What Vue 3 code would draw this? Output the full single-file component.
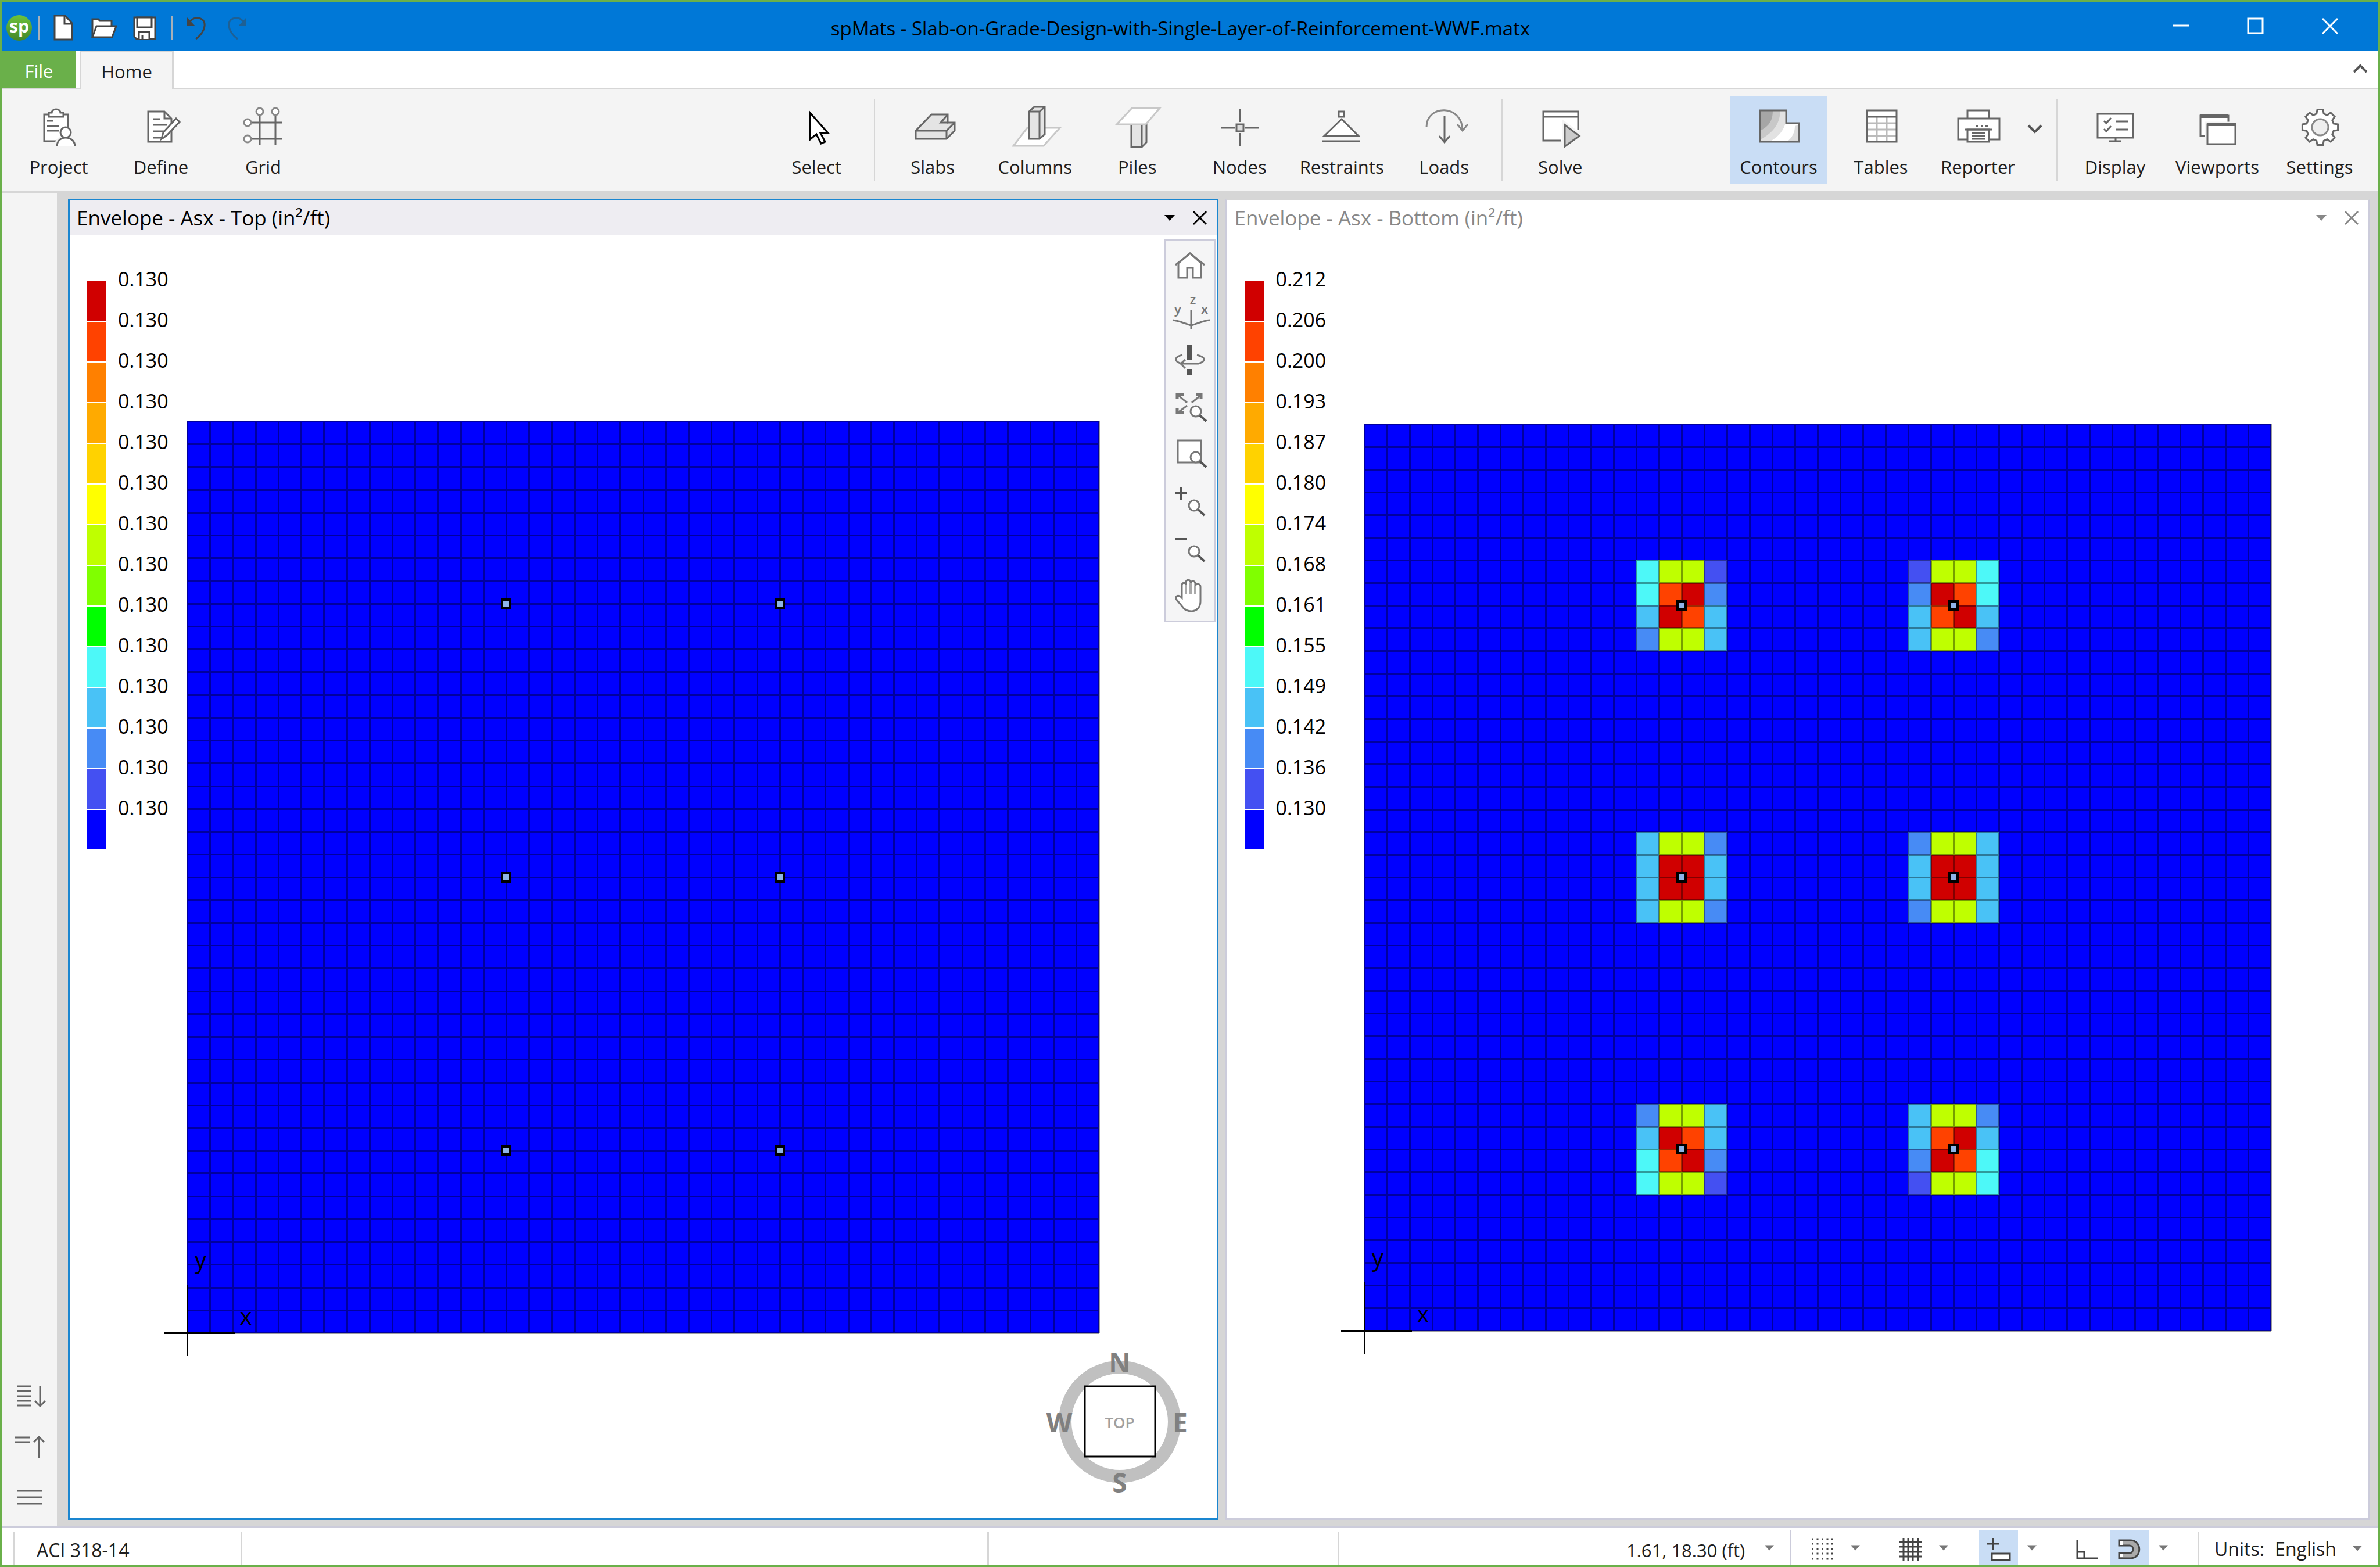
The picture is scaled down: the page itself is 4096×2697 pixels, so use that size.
<script setup>
const gear = (() => {
  const pts = []
  for (let i = 0; i < 8; i++) {
    const a = (i * Math.PI) / 4 - Math.PI / 2
    for (const [d, r] of [[-0.26, 24], [-0.16, 31], [0.16, 31], [0.26, 24]]) {
      pts.push(`${(43 + r * Math.cos(a + d)).toFixed(1)},${(42 + r * Math.sin(a + d)).toFixed(1)}`)
    }
  }
  return pts.join(' ')
})()

// Ribbon glyphs, drawn on an 84 x 84 board
const icons = {
  project: '<path fill="#fff" d="M17 20H58V66H17z"/><path fill="#fff" d="M25 24V17H30C31 9 44 9 45 17H50V24z"/><path d="M22 31H33M22 40H42M22 48H42"/><path stroke="#f4f4f4" stroke-width="8" d="M39 74C39 64 46 60 54 60S69 64 69 74"/><circle cx="54" cy="51" r="9" fill="#fff"/><path fill="#fff" d="M39 75C39 65 46 60 54 60S70 65 70 75"/>',
  define: '<path fill="#fff" d="M20 15H48L60 27V67H20z"/><path d="M48 15V27H60M28 28H41M28 38H52M28 49H50M28 60H48"/><path fill="#fff" d="M43 62L46 51L68 27L74 33L52 56z"/>',
  grid: '<path d="M36 22V72M63 22V72M22 34H74M22 62H74"/><g fill="#fff" stroke="#888"><circle cx="36" cy="15" r="6"/><circle cx="63" cy="15" r="6"/><circle cx="15" cy="34" r="6"/><circle cx="15" cy="62" r="6"/></g>',
  select: '<path fill="#fff" stroke="#000" d="M31 17V63L42 54L50 70L57 67L49 52H62z"/>',
  slabs: '<path fill="#e4e4e4" d="M13 48L40 20H68V34H80V48L66 62H13z"/><path d="M13 48H66V62M66 48L80 34M68 20L56 34H68"/>',
  columns: '<path fill="#fff" stroke="#c8c8c8" d="M29 43H85L57 74H5z"/><path fill="#e4e4e4" d="M32 15L41 7H59V54L50 62H32z"/><path d="M32 15H50V62M50 15L59 7"/>',
  piles: '<path fill="#e4e4e4" d="M32 34V76H50L58 68V34z"/><path d="M50 34V76"/><path fill="#fff" stroke="#c8c8c8" d="M33 9H81L57 37H7z"/>',
  nodes: '<path d="M43 10V33M43 52V75M11 43H34M52 43H75"/><path fill="#ddd" d="M37 37H49V49H37z"/>',
  restraints: '<path fill="#fff" d="M37 15H46V24H37zM42 28L71 57H12z"/><path d="M8 66H74"/>',
  loads: '<path stroke="#888" d="M12 42C12 2 74 2 74 48M65 37L74 48L83 37"/><path d="M43 22V68M34 57L43 68L52 57"/>',
  solve: '<path fill="#fff" stroke="none" d="M13 15H73V65H13z"/><path d="M43 65H13V15H73V47M13 24H73"/><path fill="#ccc" stroke="#f4f4f4" stroke-width="10" d="M50 38L75 57L50 75z"/><path fill="#ccc" d="M50 38L75 57L50 75z"/>',
  contours: '<path fill="#fff" stroke="none" d="M10 13H55V35H77V67H10z"/><path fill="#e2e2e2" stroke="none" d="M10 13H55V30C52 48 40 60 26 67H10z"/><path fill="#c8c8c8" stroke="none" d="M10 13H45C44 40 30 52 10 64z"/><path fill="#a6a6a6" stroke="none" d="M10 13H32C32 30 26 40 10 48z"/><path fill="#ddd" stroke="none" d="M77 38V67H56C66 60 70 50 70 40z"/><path d="M10 13H55V35H77V67H10z"/>',
  tables: '<path fill="#fff" stroke="none" d="M18 13H69V67H18z"/><path stroke="#bbb" d="M35 23V67M52 23V67M18 35H69M18 46H69M18 57H69"/><path d="M18 13H69V67H18zM18 24H69"/>',
  reporter: '<path fill="#fff" d="M24 27V13H61V27M8 27H79V63H8z"/><path fill="#fff" d="M24 46H61V67H24z"/><path d="M20 46H66M32 52H54M32 57H54M32 62H54"/><path stroke-dasharray="4 4" d="M39 40H60"/>',
  display: '<path fill="#fff" d="M12 19H73V60H12z"/><path d="M43 60V65M32 66H53M43 32H65M43 46H65M23 31L27 35L35 26M23 45L27 49L35 40"/>',
  viewports: '<path fill="#fff" d="M13 22H61V57H13z"/><path d="M13 23H61" stroke-width="6"/><path stroke="#f4f4f4" stroke-width="9" fill="#fff" d="M25 37H73V70H25z"/><path fill="#fff" d="M25 37H73V71H25z"/><path d="M24 37H74" stroke-width="6"/>',
  settings: `<polygon fill="#fff" points="${gear}"/><circle cx="43" cy="42" r="14" fill="#eee" stroke="#888"/>`
}
const leftTools = [['project', 'Project'], ['define', 'Define'], ['grid', 'Grid']]
const middleTools = [
  ['select', 'Select'], null, ['slabs', 'Slabs'], ['columns', 'Columns'], ['piles', 'Piles'],
  ['nodes', 'Nodes'], ['restraints', 'Restraints'], ['loads', 'Loads'], null, ['solve', 'Solve']
]
const outputTools = [['contours', 'Contours'], ['tables', 'Tables']]
const viewTools = [['display', 'Display'], ['viewports', 'Viewports'], ['settings', 'Settings']]

const lens = (x, y) => `<circle cx="${x}" cy="${y}" r="9" fill="#fff"/><path stroke="#555" stroke-width="4" d="M${x + 7} ${y + 7}L${x + 18} ${y + 17}"/>`
const palette = [
  ['Home view', '<path fill="#fff" d="M10 25V50H25V33H35V50H49V25L30 8z"/><path d="M5 28L30 8L55 28"/>'],
  ['Isometric view', '<path d="M32 24V57M0 42C12 43 20 48 32 51C44 48 52 43 64 42"/><g fill="#777" stroke="none" font-size="22" font-weight="600" text-anchor="middle"><text x="35" y="14">z</text><text x="9" y="31">y</text><text x="55" y="31">x</text></g>'],
  ['Rotate', '<path d="M17 21C2 24 2 33 17 36H44C58 32 58 25 42 21M22 29L14 36L22 44"/><path stroke="#555" stroke-width="9" d="M29 3V29M29 45V55"/>'],
  ['Zoom extents', '<path d="M9 9L25 22M49 9L33 22M9 39L25 27"/><path stroke-width="5" d="M8 16V8H19M40 8H49V16M8 32V39H19"/>' + lens(40, 37)],
  ['Zoom window', '<path fill="#fff" d="M9 6H49V44H9z"/>' + lens(40, 35)],
  ['Zoom in', '<path stroke="#555" stroke-width="4" d="M5 16H24M15 5V27"/>' + lens(37, 37)],
  ['Zoom out', '<path stroke="#555" stroke-width="4" d="M5 14H24"/>' + lens(37, 35)],
  ['Pan', '<path fill="#fff" d="M16 34V12C16 7 23 7 23 12V7C23 2 31 2 31 7V9C31 4 39 4 39 9V13C40 9 48 9 48 15V40C48 60 24 62 16 48L6 36C4 30 11 28 16 34z"/><path stroke="#aaa" stroke-width="4" d="M23 12V28M31 9V28M39 13V28"/>']
]

const bandColors = ['#d00000', '#ff4200', '#ff8000', '#ffaa00', '#ffd200', '#ffff00', '#bfff00', '#80ff00', '#00ff00', '#4df8f8', '#49c2f6', '#478bf5', '#4450f2', '#0000ff']
const bottomValues = ['0.212', '0.206', '0.200', '0.193', '0.187', '0.180', '0.174', '0.168', '0.161', '0.155', '0.149', '0.142', '0.136', '0.130']

// Contour patches around the loaded nodes; letters are keys of fills
const fills = { R: '#d00000', O: '#ff4200', L: '#bfff00', C: '#4df8f8', S: '#49c2f6', B: '#478bf5', I: '#4450f2' }
const corner = ['CLLI', 'CORB', 'SROS', 'BLLS']
const centre = ['SLLB', 'SRRS', 'SRRS', 'SLLB']
const flipX = rows => rows.map(r => [...r].reverse().join(''))
const flipY = rows => [...rows].reverse()
const patches = [
  [12, 6, corner], [24, 6, flipX(corner)],
  [12, 18, centre], [24, 18, flipX(centre)],
  [12, 30, flipY(corner)], [24, 30, flipX(flipY(corner))]
]
const cells = patches.flatMap(([c, r, rows]) =>
  rows.flatMap((row, j) => [...row].map((k, i) => ({ col: c + i, row: r + j, fill: fills[k] }))))
const nodes = [8, 20, 32].flatMap(row => [14, 26].map(col => ({ col, row })))

const viewports = [
  { title: 'Envelope - Asx - Top (in²/ft)', active: true, w: 1974, x: 202, y: 320, size: 1569, values: Array(14).fill('0.130'), cells: [] },
  { title: 'Envelope - Asx - Bottom (in²/ft)', active: false, w: 1963, x: 236, y: 325, size: 1560, values: bottomValues, cells }
]
const gridPath = v => {
  let d = ''
  for (let i = 0; i <= 40; i++) {
    const p = Math.round((i * v.size) / 40)
    d += `M${p} 0V${v.size}M0 ${p}H${v.size}`
  }
  return d
}
const at = (v, n) => Math.round((n * v.size) / 40)

const snaps = [
  { name: 'Dot grid', on: false, menu: true, art: '<path stroke-dasharray="3 5.5" d="M16 16H53M16 24H53M16 33H53M16 41H53M16 50H53"/>' },
  { name: 'Grid lines', on: false, menu: true, art: '<path d="M14 21H54M14 29H54M14 38H54M14 46H54M22 14V53M30 14V53M38 14V53M47 14V53"/>' },
  { name: 'Object snap', on: true, menu: true, art: '<path d="M14 24H34M24 14V34"/><path fill="#fff" d="M22 41H53V52H22z"/>' },
  { name: 'Ortho', on: false, menu: false, art: '<path d="M17 17V49H52M17 38H29V49"/>' },
  { name: 'Magnet', on: true, menu: true, art: '<path fill="#aaa" d="M15 18H34C55 18 55 49 34 49H15V40H33C41 40 41 27 33 27H15z"/><path fill="#fff" stroke="none" d="M17 20H22V26H17zM17 41H22V47H17z"/>' }
]
</script>

<template>
  <div class="app">
    <header class="titlebar">
      <div class="quick">
        <svg class="logo" viewBox="0 0 44 44">
          <defs><linearGradient id="lg" x1="0" y1="0" x2="0" y2="1"><stop offset="0" stop-color="#6cc33c" /><stop offset="1" stop-color="#44862a" /></linearGradient></defs>
          <circle cx="22" cy="22" r="22" fill="url(#lg)" />
          <text x="22" y="30" text-anchor="middle" class="logo-text">sp</text>
        </svg>
        <i class="qsep"></i>
        <button class="qbtn" aria-label="New"><svg viewBox="0 0 44 44"><path d="M7 1H25L37 14V42H7z" /><path d="M24 1V15H37" fill="none" /></svg></button>
        <button class="qbtn" aria-label="Open"><svg viewBox="0 0 44 44"><path d="M2 38V7H12L15 10H35V19" /><path d="M9 19H43L36 38H2z" /></svg></button>
        <button class="qbtn" aria-label="Save"><svg viewBox="0 0 44 44"><path d="M4 4H40V41H8L4 37z" /><path d="M9 4H34V21H9zM12 41V29H30V41M18 41V34" /></svg></button>
        <i class="qsep"></i>
        <button class="qbtn" aria-label="Undo"><svg viewBox="0 0 44 44"><path fill="none" d="M21 41C40 28 42 4 22 5C16 5 12 9 9 15" /><path d="M6 4V19H20z" fill="#444" stroke="none" /></svg></button>
        <button class="qbtn" aria-label="Redo" disabled><svg viewBox="0 0 44 44"><path fill="none" d="M23 41C4 28 2 4 22 5C28 5 32 9 35 15" /><path d="M38 4V19H24z" fill="#444" stroke="none" /></svg></button>
      </div>
      <h1>spMats - Slab-on-Grade-Design-with-Single-Layer-of-Reinforcement-WWF.matx</h1>
      <div class="winbtns">
        <button aria-label="Minimize"><svg viewBox="0 0 28 28"><path d="M0 13H28" /></svg></button>
        <button aria-label="Maximize"><svg viewBox="0 0 28 28"><path d="M1 1H26V26H1z" /></svg></button>
        <button aria-label="Close"><svg viewBox="0 0 28 28"><path d="M1 1L27 27M27 1L1 27" /></svg></button>
      </div>
    </header>

    <nav class="tabs">
      <button class="file">File</button>
      <button class="home">Home</button>
      <button class="collapse" aria-label="Collapse ribbon"><svg viewBox="0 0 26 18"><path d="M2 15L13 4L24 15" /></svg></button>
    </nav>

    <section class="ribbon">
      <button v-for="t in leftTools" :key="t[0]" class="tool"><svg viewBox="0 0 84 84" v-html="icons[t[0]]"></svg><span>{{ t[1] }}</span></button>
      <div class="wide"></div>
      <template v-for="(t, i) in middleTools" :key="i">
        <button v-if="t" class="tool"><svg viewBox="0 0 84 84" v-html="icons[t[0]]"></svg><span>{{ t[1] }}</span></button>
        <i v-else class="rsep"></i>
      </template>
      <div class="narrow"></div>
      <button v-for="t in outputTools" :key="t[0]" class="tool" :class="{ on: t[0] === 'contours' }"><svg viewBox="0 0 84 84" v-html="icons[t[0]]"></svg><span>{{ t[1] }}</span></button>
      <div class="split">
        <button class="tool reporter"><svg viewBox="0 0 84 84" v-html="icons.reporter"></svg><span>Reporter</span></button>
        <button class="more" aria-label="Reporter options"><svg viewBox="0 0 26 18"><path d="M2 3L13 14L24 3" /></svg></button>
      </div>
      <i class="rsep"></i>
      <button v-for="t in viewTools" :key="t[0]" class="tool"><svg viewBox="0 0 84 84" v-html="icons[t[0]]"></svg><span>{{ t[1] }}</span></button>
    </section>

    <main class="work">
      <aside class="side">
        <button aria-label="Expand list"><svg viewBox="0 0 48 48"><path d="M2 7H27M2 15H27M2 24H27M2 32H27M2 40H27M42 6V41M33 32L42 41L51 32" /></svg></button>
        <button aria-label="Collapse list"><svg viewBox="0 0 48 48"><path d="M-1 8H25M-1 16H25M40 7V43M31 16L40 7L49 16" /></svg></button>
        <button aria-label="Menu"><svg viewBox="0 0 48 48"><path d="M2 13H46M2 24H46M2 35H46" /></svg></button>
      </aside>

      <section v-for="v in viewports" :key="v.title" class="viewport" :class="{ active: v.active }">
        <header class="vhead">
          <h2>{{ v.title }}</h2>
          <button class="vmenu" aria-label="Viewport menu"><svg viewBox="0 0 18 10"><path d="M0 0H18L9 10z" /></svg></button>
          <button class="vclose" aria-label="Close viewport"><svg viewBox="0 0 26 26"><path d="M1 1L25 25M25 1L1 25" /></svg></button>
        </header>
        <div class="canvas">
          <svg class="model" :viewBox="`0 0 ${v.w} 2208`" preserveAspectRatio="xMinYMin meet">
            <g :transform="`translate(${v.x} ${v.y})`">
              <rect :width="v.size" :height="v.size" fill="#0000ff" />
              <rect v-for="(c, i) in v.cells" :key="i" :x="at(v, c.col)" :y="at(v, c.row)" :width="at(v, c.col + 1) - at(v, c.col)" :height="at(v, c.row + 1) - at(v, c.row)" :fill="c.fill" />
              <path :d="gridPath(v)" class="gridlines" />
              <rect v-for="(n, i) in nodes" :key="'n' + i" :x="at(v, n.col) - 7" :y="at(v, n.row) - 7" width="14" height="14" class="node" />
              <g :transform="`translate(0 ${v.size})`">
                <path d="M-40 0H82M0 -83V40" class="axis" />
                <text x="23" y="-111" class="axis-name">y</text>
                <text x="101" y="-14" class="axis-name">x</text>
              </g>
            </g>
          </svg>
          <ul class="legend">
            <li v-for="(val, i) in v.values" :key="i"><i :style="{ background: bandColors[i] }"></i><span>{{ val }}</span></li>
          </ul>
          <div v-if="v.active" class="palette">
            <button v-for="p in palette" :key="p[0]" :aria-label="p[0]"><svg viewBox="0 0 60 60" v-html="p[1]"></svg></button>
          </div>
          <svg v-if="v.active" class="compass" viewBox="0 0 250 250">
            <circle cx="125" cy="125" r="94" fill="none" stroke="#c0c0c0" stroke-width="22" />
            <rect x="65" y="64" width="121" height="121" fill="#fff" stroke="#000" stroke-width="3" />
            <g class="dir">
              <text x="125" y="40">N</text><text x="21" y="143">W</text><text x="229" y="143">E</text><text x="125" y="247">S</text>
            </g>
            <text x="125" y="136" class="face">TOP</text>
          </svg>
        </div>
      </section>
    </main>

    <footer class="status">
      <div class="cell stub"></div>
      <div class="cell code">ACI 318-14</div>
      <div class="cell long"></div>
      <div class="cell mid"></div>
      <div class="rest"></div>
      <div class="coords"><span>1.61, 18.30 (ft)</span><button class="drop" aria-label="Coordinate options"><svg viewBox="0 0 18 10"><path d="M0 0H18L9 10z" /></svg></button></div>
      <div class="snaps">
        <div v-for="s in snaps" :key="s.name" class="snap" :class="{ single: !s.menu }">
          <button class="toggle" :class="{ on: s.on }" :aria-label="s.name"><svg viewBox="0 0 67 61" v-html="s.art"></svg></button>
          <button v-if="s.menu" class="drop" :aria-label="s.name + ' options'"><svg viewBox="0 0 18 10"><path d="M0 0H18L9 10z" /></svg></button>
        </div>
      </div>
      <div class="units">
        <label for="units">Units:</label>
        <select id="units"><option>English</option></select>
        <svg class="caret" viewBox="0 0 18 10"><path d="M0 0H18L9 10z" /></svg>
      </div>
    </footer>
  </div>
</template>

<style>
html, body { margin: 0; background: #fff; }
</style>

<style scoped>
.app {
  box-sizing: border-box;
  height: 100vh;
  display: flex;
  flex-direction: column;
  border: 3px solid #6ab04a;
  background: #fff;
  color: #1e1e1e;
  font-family: "Open Sans", "Noto Sans", sans-serif;
  font-size: 31px;
  overflow: hidden;
}
button, select { font: inherit; color: inherit; border: 0; padding: 0; margin: 0; background: none; }
svg { display: block; overflow: visible; }
h1, h2, ul { margin: 0; padding: 0; font-weight: 400; }

.titlebar { flex: none; display: flex; align-items: center; height: 84px; background: #0078d7; }
.quick { display: flex; align-items: center; padding: 5px 0 0 8px; }
.logo { width: 44px; height: 44px; }
.logo-text { fill: #fff; font-size: 30px; font-weight: 700; }
.qsep { width: 3px; height: 40px; margin: 0 5px 0 11px; background: #a8b0b8; }
.qbtn { width: 70px; height: 44px; display: flex; justify-content: center; }
.qbtn svg { width: 44px; height: 44px; fill: #fff; stroke: #444; stroke-width: 3; }
.qbtn:disabled { opacity: 0.45; }
.titlebar h1 { flex: 1; padding: 7px 70px 0 0; text-align: center; font-size: 33px; color: #000; white-space: nowrap; }
.winbtns { display: flex; padding-right: 19px; }
.winbtns button { width: 128px; height: 84px; display: flex; align-items: center; justify-content: center; }
.winbtns svg { width: 28px; height: 28px; fill: none; stroke: #fff; stroke-width: 3; }

.tabs { flex: none; display: flex; height: 67px; box-sizing: border-box; box-shadow: inset 0 -3px #d6d6d6; }
.file { width: 128px; height: 64px; padding-top: 5px; background: #6ab04a; color: #fff; }
.home { box-sizing: border-box; width: 162px; height: 67px; margin-left: 6px; padding-top: 2px; border: 3px solid #d6d6d6; border-bottom: 0; background: #f4f4f4; }
.collapse { margin-left: auto; width: 26px; height: 18px; margin-top: 22px; margin-right: 18px; }
.collapse svg, .more svg { width: 26px; height: 18px; fill: none; stroke: #555; stroke-width: 4; }

.ribbon { flex: none; display: flex; gap: 8px; height: 174px; box-sizing: border-box; padding: 11px 17px 12px 14px; background: #f4f4f4; }
.tool { flex: none; width: 168px; height: 151px; display: flex; flex-direction: column; align-items: center; gap: 5px; padding-top: 12px; box-sizing: border-box; line-height: 42px; }
.tool svg { flex: none; width: 84px; height: 84px; fill: none; stroke: #666; stroke-width: 3; }
.tool.on { background: #c9ddf5; }
.wide { flex: 769; }
.narrow { flex: 192; }
.rsep { flex: none; width: 2px; height: 140px; margin: 6px 7px 0; background: #d6d6d6; }
.split { flex: none; display: flex; width: 195px; }
.tool.reporter { width: 150px; }
.more { flex: 1; display: flex; justify-content: center; padding-top: 48px; align-items: flex-start; }

.work { flex: 1; min-height: 0; display: flex; background: #d6d6d6; padding: 0 14px 11px 0; }
.side { flex: none; width: 95px; box-sizing: border-box; margin: 5px 19px -11px 0; padding-bottom: 26px; display: flex; flex-direction: column; justify-content: flex-end; align-items: center; gap: 39px; background: #f4f4f4; }
.side button, .side svg { width: 48px; height: 48px; }
.side svg { fill: none; stroke: #666; stroke-width: 3; }

.viewport { flex: 1969 1 0; min-width: 0; margin-top: 14px; margin-bottom: 0; box-sizing: border-box; display: flex; flex-direction: column; border: 3px solid #ccccdb; border-top-color: #d6d6d6; background: #fff; color: #888; }
.viewport.active { flex-grow: 1980; margin-right: 12px; border-color: #1a86d0; color: #000; }
.vhead { flex: none; display: flex; align-items: center; height: 60px; padding-left: 12px; }
.active .vhead { background: #eeedf2; }
.vhead h2 { flex: 1; font-size: 35px; line-height: 60px; }
.vmenu, .vclose { width: 52px; height: 60px; display: flex; align-items: center; justify-content: center; }
.vclose { margin-right: 3px; }
.vmenu svg { width: 18px; height: 10px; fill: currentColor; }
.vclose svg { width: 24px; height: 24px; stroke: currentColor; stroke-width: 3; }

.canvas { flex: 1; min-height: 0; position: relative; display: flex; color: #000; }
.model { flex: 1; min-width: 0; height: 100%; }
.gridlines { fill: none; stroke: #000; stroke-opacity: 0.38; stroke-width: 3; shape-rendering: crispEdges; }
.node { fill: #8fb4e8; stroke: #000; stroke-width: 4; }
.axis { fill: none; stroke: #000; stroke-width: 3; shape-rendering: crispEdges; }
.axis-name { font-size: 40px; text-anchor: middle; fill: #000; }
.legend { position: absolute; left: 30px; top: 40px; list-style: none; }
.legend li { display: flex; gap: 20px; height: 70px; line-height: 70px; font-size: 34px; }
.legend i { width: 33px; height: 68px; margin-top: 39px; }
.palette { position: absolute; top: 6px; right: 2px; width: 89px; box-sizing: border-box; padding: 3px 0; display: flex; flex-direction: column; border: 3px solid #ccccdb; background: #f5f5f6; }
.palette button { height: 81px; display: flex; align-items: center; justify-content: center; }
.palette svg { width: 60px; height: 60px; fill: none; stroke: #777; stroke-width: 3; }
.compass { position: absolute; right: 42px; bottom: 41px; width: 250px; height: 250px; }
.dir { font-size: 46px; font-weight: 700; fill: #808080; text-anchor: middle; }
.face { font-size: 26px; font-weight: 600; fill: #a0a0a0; text-anchor: middle; }

.status { flex: none; display: flex; height: 67px; box-sizing: border-box; border-top: 3px solid #ccccdb; font-size: 32px; }
.cell { box-sizing: border-box; margin-top: 6px; border-right: 3px solid #d6d6d6; line-height: 64px; white-space: nowrap; }
.stub { flex: none; width: 22px; }
.code { flex: none; width: 392px; padding-left: 38px; }
.long { flex: 1284; }
.mid { flex: 601; }
.rest { flex: 495; }
.coords { flex: none; width: 284px; box-sizing: border-box; margin-top: 3px; display: flex; justify-content: space-between; padding-right: 11px; border-right: 3px solid #ccccdb; line-height: 70px; font-size: 31px; white-space: nowrap; }
.drop { width: 48px; display: flex; align-items: center; justify-content: center; }
.drop svg, .caret { width: 16px; height: 10px; fill: #777; }
.snaps { flex: none; display: flex; margin: 3px 35px 0 19px; gap: 37px; }
.snap { display: flex; }
.snap.single { margin-right: -30px; }
.toggle { width: 67px; }
.toggle.on { background: #c9ddf5; }
.toggle svg { width: 67px; height: 61px; fill: none; stroke: #444; stroke-width: 3; }
.units { flex: none; width: 311px; box-sizing: border-box; margin-top: 6px; padding: 0 28px 0 26px; display: flex; align-items: center; border-left: 3px solid #d6d6d6; }
.units label { margin-right: 18px; }
.units select { appearance: none; }
.caret { margin-left: auto; }
</style>
